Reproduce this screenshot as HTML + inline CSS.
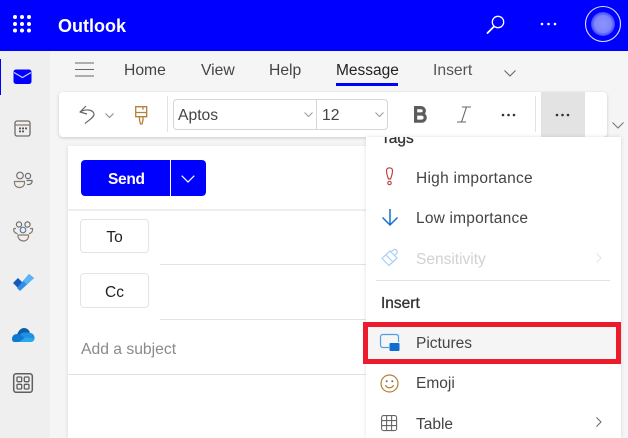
<!DOCTYPE html>
<html><head><meta charset="utf-8"><style>
html,body{margin:0;padding:0}
body{width:628px;height:438px;overflow:hidden;position:relative;background:#f5f5f5;font-family:"Liberation Sans",sans-serif;color:#333}
.a{position:absolute}
.t{position:absolute;white-space:nowrap;line-height:20px}
svg{position:absolute;overflow:visible}
</style></head><body>
<div class="a" style="left:0;top:51px;width:50px;height:387px;background:#efefef"></div>
<div class="a" style="left:0;top:0;width:628px;height:51px;background:#00f"></div>

<!-- waffle -->
<svg style="left:13px;top:15px" width="18" height="18" fill="#fff"><circle cx="2" cy="2" r="2"/><circle cx="9" cy="2" r="2"/><circle cx="16" cy="2" r="2"/><circle cx="2" cy="9" r="2"/><circle cx="9" cy="9" r="2"/><circle cx="16" cy="9" r="2"/><circle cx="2" cy="15.5" r="2"/><circle cx="9" cy="15.5" r="2"/><circle cx="16" cy="15.5" r="2"/></svg>
<div class="t" style="left:58px;top:16px;font-size:18px;font-weight:bold;color:#fff">Outlook</div>
<!-- search -->
<svg style="left:484px;top:14px" width="22" height="22" fill="none" stroke="#fff" stroke-width="1.300"><circle cx="14" cy="8" r="5.700"/><path d="M10 12.500L3.500 19" stroke-width="1.800" stroke-linecap="round"/></svg>
<svg style="left:540px;top:22px" width="18" height="4" fill="#fff"><circle cx="2" cy="2" r="1.300"/><circle cx="8.500" cy="2" r="1.300"/><circle cx="15" cy="2" r="1.300"/></svg>
<!-- avatar -->
<svg style="left:584px;top:5px" width="38" height="38"><defs><radialGradient id="g"><stop offset="0" stop-color="#8d93fc"/><stop offset=".7" stop-color="#7f86fb"/><stop offset="1" stop-color="#3e42fb"/></radialGradient></defs><circle cx="19" cy="19" r="17.500" fill="none" stroke="#dfe0ff" stroke-width="1.100"/><circle cx="19" cy="19" r="12" fill="url(#g)"/></svg>

<!-- rail -->
<div class="a" style="left:0;top:59px;width:1px;height:36px;background:#00f"></div>
<svg style="left:13px;top:69px" width="20" height="16"><rect x=".5" y=".5" width="18" height="14.500" rx="2.500" fill="#00f"/><path d="M1 3.500L9.500 8.500L18 3.500" fill="none" stroke="#c8c8ff" stroke-width="1.300"/></svg>
<svg style="left:14px;top:120px" width="18" height="18" fill="none" stroke="#6d6d6d" stroke-width="1.300"><rect x="1" y="1" width="15" height="15" rx="2"/><path d="M1 5h15" stroke="#8a7f72"/><g fill="#555" stroke="none"><rect x="5" y="7.500" width="2" height="1.800"/><rect x="8" y="7.500" width="2" height="1.800"/><rect x="11" y="7.500" width="2" height="1.800"/><rect x="5" y="10.500" width="2" height="1.800"/><rect x="8" y="10.500" width="2" height="1.800"/></g></svg>
<svg style="left:13px;top:171px" width="22" height="18" fill="none" stroke="#6f6f6f" stroke-width="1.200"><circle cx="7" cy="4.500" r="3.300" stroke="#77706c"/><circle cx="15" cy="5" r="2.600"/><path d="M1.500 10.500h10c.5 4-2 6-5 6s-5.500-2-5-6z" stroke="#8a7a6a"/><path d="M13.500 9.500h5.500c.5 2.500-1.500 4.500-5 4"/></svg>
<svg style="left:12px;top:221px" width="22" height="22" fill="none" stroke="#6f6f6f" stroke-width="1.200"><circle cx="7" cy="3.500" r="2.600"/><circle cx="15.500" cy="3.500" r="2.600"/><circle cx="11" cy="9" r="2.800" stroke="#5c7c98"/><path d="M4 7.500H2c-1 2 .5 5 3.500 5M18 7.500h2.500c.5 2.500-1 5-3.500 5" stroke="#8a7a6a"/><path d="M6 14h10.500c.5 4-2.500 6-5 6s-6-2-5.500-6z" stroke="#8a7a6a"/></svg>
<svg style="left:12px;top:273px" width="23" height="18"><path d="M1 10l5-5 5 5-5 5z" fill="#1558b8"/><path d="M17 1L22 5 8 18 5 15z" fill="#2f8ee8"/><path d="M17 1L22 5 15 11.500 11 8z" fill="#58b4f2"/></svg>
<svg style="left:12px;top:328px" width="24" height="15"><path d="M5 7C6 3 9 0 12 0C15 0 17 2 18 4.500L10 8z" fill="#0f5cab"/><path d="M8 6C11 4 15 4 18 5C21 5 23 8 22.500 11L11 10z" fill="#1b92e4"/><path d="M0 11C0 8 2 6 5 6C7 6 9 7 10 8L14 11L7 14H3C1 14 0 13 0 11z" fill="#0f78d4"/><path d="M7 14L14 9C16 10 19 10 22.500 10.500C22.500 12.500 21 14 19 14z" fill="#2aa8ea"/></svg>
<svg style="left:13px;top:373px" width="20" height="20" fill="none" stroke="#5f5f5f" stroke-width="1.300"><rect x=".7" y=".7" width="18.600" height="18.600" rx="2.500" stroke-width="1.500"/><rect x="4" y="4" width="4.700" height="4.700" rx="1"/><rect x="11.300" y="4" width="4.700" height="4.700" rx="1"/><rect x="4" y="11.300" width="4.700" height="4.700" rx="1"/><rect x="11.300" y="11.300" width="4.700" height="4.700" rx="1"/></svg>

<!-- ribbon tabs -->
<svg style="left:75px;top:62px" width="19" height="15" stroke="#666" stroke-width="1.100"><path d="M0 1h19M0 7.500h19M0 14h19"/></svg>
<div class="t" style="left:124px;top:61px;font-size:15.700px;color:#444">Home</div>
<div class="t" style="left:201px;top:61px;font-size:15.700px;color:#444">View</div>
<div class="t" style="left:269px;top:61px;font-size:15.700px;color:#444">Help</div>
<div class="t" style="left:336px;top:61px;font-size:15.500px;color:#222">Message</div>
<div class="a" style="left:336px;top:83px;width:62px;height:3px;background:#00f"></div>
<div class="t" style="left:433px;top:61px;font-size:15.700px;color:#555">Insert</div>
<svg style="left:504px;top:70px" width="12" height="7" fill="none" stroke="#666" stroke-width="1.100"><path d="M.5 .5l5.500 5.500 5.500-5.500"/></svg>

<!-- toolbar -->
<div class="a" style="left:59px;top:92px;width:548px;height:45px;background:#fff;border-radius:4px;box-shadow:0 1px 3px rgba(0,0,0,.18)"></div>
<svg style="left:78px;top:104px" width="18" height="20" fill="none" stroke="#666" stroke-width="1.200" stroke-linejoin="round"><path d="M8 2L2 8l7 2M2 8c5-3 13-3 14 2 .5 3-5 6-9 9.500"/></svg>
<svg style="left:105px;top:113px" width="10" height="6" fill="none" stroke="#888"><path d="M.5 .5l4 4 4-4"/></svg>
<svg style="left:135px;top:106px" width="13" height="19" fill="none" stroke="#b5803a" stroke-width="1.300"><path d="M.7.7h11v10H.7zM.7 6.500h11M8 .7v3M4.500 10.700h3.500V14l-1 4H5.500l-1-4z"/></svg>
<div class="a" style="left:167px;top:96px;width:1px;height:36px;background:#e3e3e3"></div>
<div class="a" style="left:173px;top:99px;width:144px;height:31px;border:1px solid #d6d6d6;border-radius:4px 0 0 4px;box-sizing:border-box"></div>
<div class="a" style="left:316px;top:99px;width:72px;height:31px;border:1px solid #d6d6d6;border-radius:0 4px 4px 0;box-sizing:border-box"></div>
<div class="t" style="left:178px;top:106px;font-size:15.700px;color:#444">Aptos</div>
<svg style="left:304px;top:112px" width="9" height="5" fill="none" stroke="#999"><path d="M.5 .5l4 4 4-4"/></svg>
<div class="t" style="left:322px;top:106px;font-size:15.700px;color:#444">12</div>
<svg style="left:375px;top:112px" width="9" height="5" fill="none" stroke="#999"><path d="M.5 .5l4 4 4-4"/></svg>
<svg style="left:414px;top:106px" width="13" height="17" fill="none" stroke="#5c5c5c" stroke-width="3.200"><path d="M1.600 1.600h5c5 0 5 6.400 0 6.400h-5zM1.600 8h5.500c5.500 0 5.500 7.200 0 7.200H1.600z"/></svg>
<svg style="left:457px;top:106px" width="15" height="17" fill="none" stroke="#666" stroke-width="1.100"><path d="M5 1h9M0 16h9M9.500 1L4.500 16"/></svg>
<svg style="left:501px;top:113px" width="15" height="4" fill="#333"><circle cx="2" cy="2" r="1.300"/><circle cx="7.500" cy="2" r="1.300"/><circle cx="13" cy="2" r="1.300"/></svg>
<div class="a" style="left:535px;top:96px;width:1px;height:36px;background:#e3e3e3"></div>
<div class="a" style="left:541px;top:92px;width:44px;height:45px;background:#e3e3e3"></div>
<svg style="left:555px;top:113px" width="15" height="4" fill="#333"><circle cx="2" cy="2" r="1.300"/><circle cx="7.500" cy="2" r="1.300"/><circle cx="13" cy="2" r="1.300"/></svg>
<svg style="left:612px;top:122px" width="12" height="7" fill="none" stroke="#777" stroke-width="1.100"><path d="M.5 .5l5.500 5.500 5.500-5.500"/></svg>

<!-- compose -->
<div class="a" style="left:68px;top:146px;width:320px;height:292px;background:#fff;box-shadow:-1px 0 3px rgba(0,0,0,.08)"></div>
<div class="a" style="left:81px;top:160px;width:125px;height:36px;background:#00f;border-radius:4px"></div>
<div class="a" style="left:170px;top:160px;width:1px;height:36px;background:#fff"></div>
<div class="t" style="left:108px;top:170px;font-size:15.500px;font-weight:bold;color:#fff;letter-spacing:-.3px">Send</div>
<svg style="left:181px;top:175px" width="14" height="8" fill="none" stroke="#fff" stroke-width="1.200"><path d="M.7 .7l6.300 6.300 6.300-6.300"/></svg>
<div class="a" style="left:68px;top:209px;width:298px;height:2px;background:#eee"></div>
<div class="a" style="left:80px;top:219px;width:69px;height:34px;box-sizing:border-box;border:1px solid #e4e4e4;border-radius:4px"></div>
<div class="t" style="left:80px;top:228px;width:69px;text-align:center;font-size:15.500px;color:#222">To</div>
<div class="a" style="left:160px;top:264px;width:206px;height:1px;background:#e3e3e3"></div>
<div class="a" style="left:80px;top:273px;width:69px;height:35px;box-sizing:border-box;border:1px solid #e4e4e4;border-radius:4px"></div>
<div class="t" style="left:80px;top:283px;width:69px;text-align:center;font-size:15.500px;color:#222">Cc</div>
<div class="a" style="left:160px;top:319px;width:206px;height:1px;background:#e3e3e3"></div>
<div class="t" style="left:81px;top:340px;font-size:15.700px;color:#8a8a8a">Add a subject</div>
<div class="a" style="left:68px;top:374px;width:298px;height:1px;background:#e3e3e3"></div>

<!-- menu -->
<div class="a" style="left:366px;top:137px;width:255px;height:301px;background:#fff;overflow:hidden;box-shadow:0 0 4px rgba(0,0,0,.12)">
<div class="t" style="left:15px;top:-8px;font-size:15.500px;color:#333;-webkit-text-stroke:.3px #333">Tags</div>
</div>
<svg style="left:385px;top:167px" width="10" height="19" fill="none" stroke="#b8474b" stroke-width="1.200" stroke-linejoin="round"><path d="M1.500 3.500c0-3.500 6-3.500 6 0 0 2-1 6-2 8.500H3.500C2.500 9.500 1.500 5.500 1.500 3.500z"/><circle cx="4.500" cy="16" r="1.700"/></svg>
<div class="t" style="left:416px;top:169px;font-size:15.500px;color:#444;letter-spacing:.27px">High importance</div>
<svg style="left:381px;top:208px" width="18" height="19" fill="none" stroke="#1172d4" stroke-width="1.500"><path d="M9 1v16M1.500 9.500L9 17l7.500-7.500"/></svg>
<div class="t" style="left:416px;top:209px;font-size:15.500px;color:#444;letter-spacing:.2px">Low importance</div>
<svg style="left:381px;top:249px" width="18" height="19" fill="none" stroke="#a9cff5" stroke-width="1.200" stroke-linejoin="round"><path d="M1 9.500L9 2l7 7-8 7.500zM5 6l7 7M10 3l3-2.500c1.500-.5 4 1.500 3 3.500l-3 3"/></svg>
<div class="t" style="left:416px;top:250px;font-size:15.500px;color:#d2d2d2">Sensitivity</div>
<svg style="left:596px;top:253px" width="6" height="10" fill="none" stroke="#e3e3e3"><path d="M.5 .5l4.500 4.500-4.500 4.500"/></svg>
<div class="a" style="left:376px;top:280px;width:234px;height:1px;background:#e2e2e2"></div>
<div class="t" style="left:381px;top:294px;font-size:15.500px;color:#333;-webkit-text-stroke:.3px #333">Insert</div>

<div class="a" style="left:363px;top:322px;width:258px;height:42px;box-sizing:border-box;border:5px solid #ed1c2c;background:#f5f5f5"></div>
<svg style="left:380px;top:334px" width="20" height="18"><path d="M3 13.500c-1.500 0-2.500-1-2.500-2.500V3C.5 1.500 1.500.5 3 .5h13c1.500 0 2.500 1 2.500 2.500v5" fill="none" stroke="#4f9fe8" stroke-width="1.200"/><path d="M3 13.500h6" stroke="#4f9fe8" stroke-width="1.200"/><rect x="9.500" y="9" width="10" height="8" rx="1" fill="#0f6cd0"/></svg>
<div class="t" style="left:416px;top:334px;font-size:15.500px;color:#444">Pictures</div>
<svg style="left:380px;top:374px" width="19" height="19" fill="none" stroke="#b5803a" stroke-width="1.200"><circle cx="9.500" cy="9.500" r="8.500"/><path d="M5.500 11.500c2 3 6 3 8 0" stroke-linecap="round"/><circle cx="6.700" cy="7.200" r="1" fill="#7a6a55" stroke="none"/><circle cx="12.300" cy="7.200" r="1" fill="#7a6a55" stroke="none"/></svg>
<div class="t" style="left:416px;top:374px;font-size:15.500px;color:#444">Emoji</div>
<svg style="left:381px;top:415px" width="17" height="17" fill="none" stroke="#666" stroke-width="1.100"><rect x=".6" y=".6" width="15" height="15" rx="2"/><path d="M5.600 .6v15M10.600 .6v15M.6 5.600h15M.6 10.600h15"/></svg>
<div class="t" style="left:416px;top:415px;font-size:15.500px;color:#444">Table</div>
<svg style="left:596px;top:417px" width="6" height="10" fill="none" stroke="#666"><path d="M.5 .5l4.500 4.500-4.500 4.500"/></svg>
</body></html>
